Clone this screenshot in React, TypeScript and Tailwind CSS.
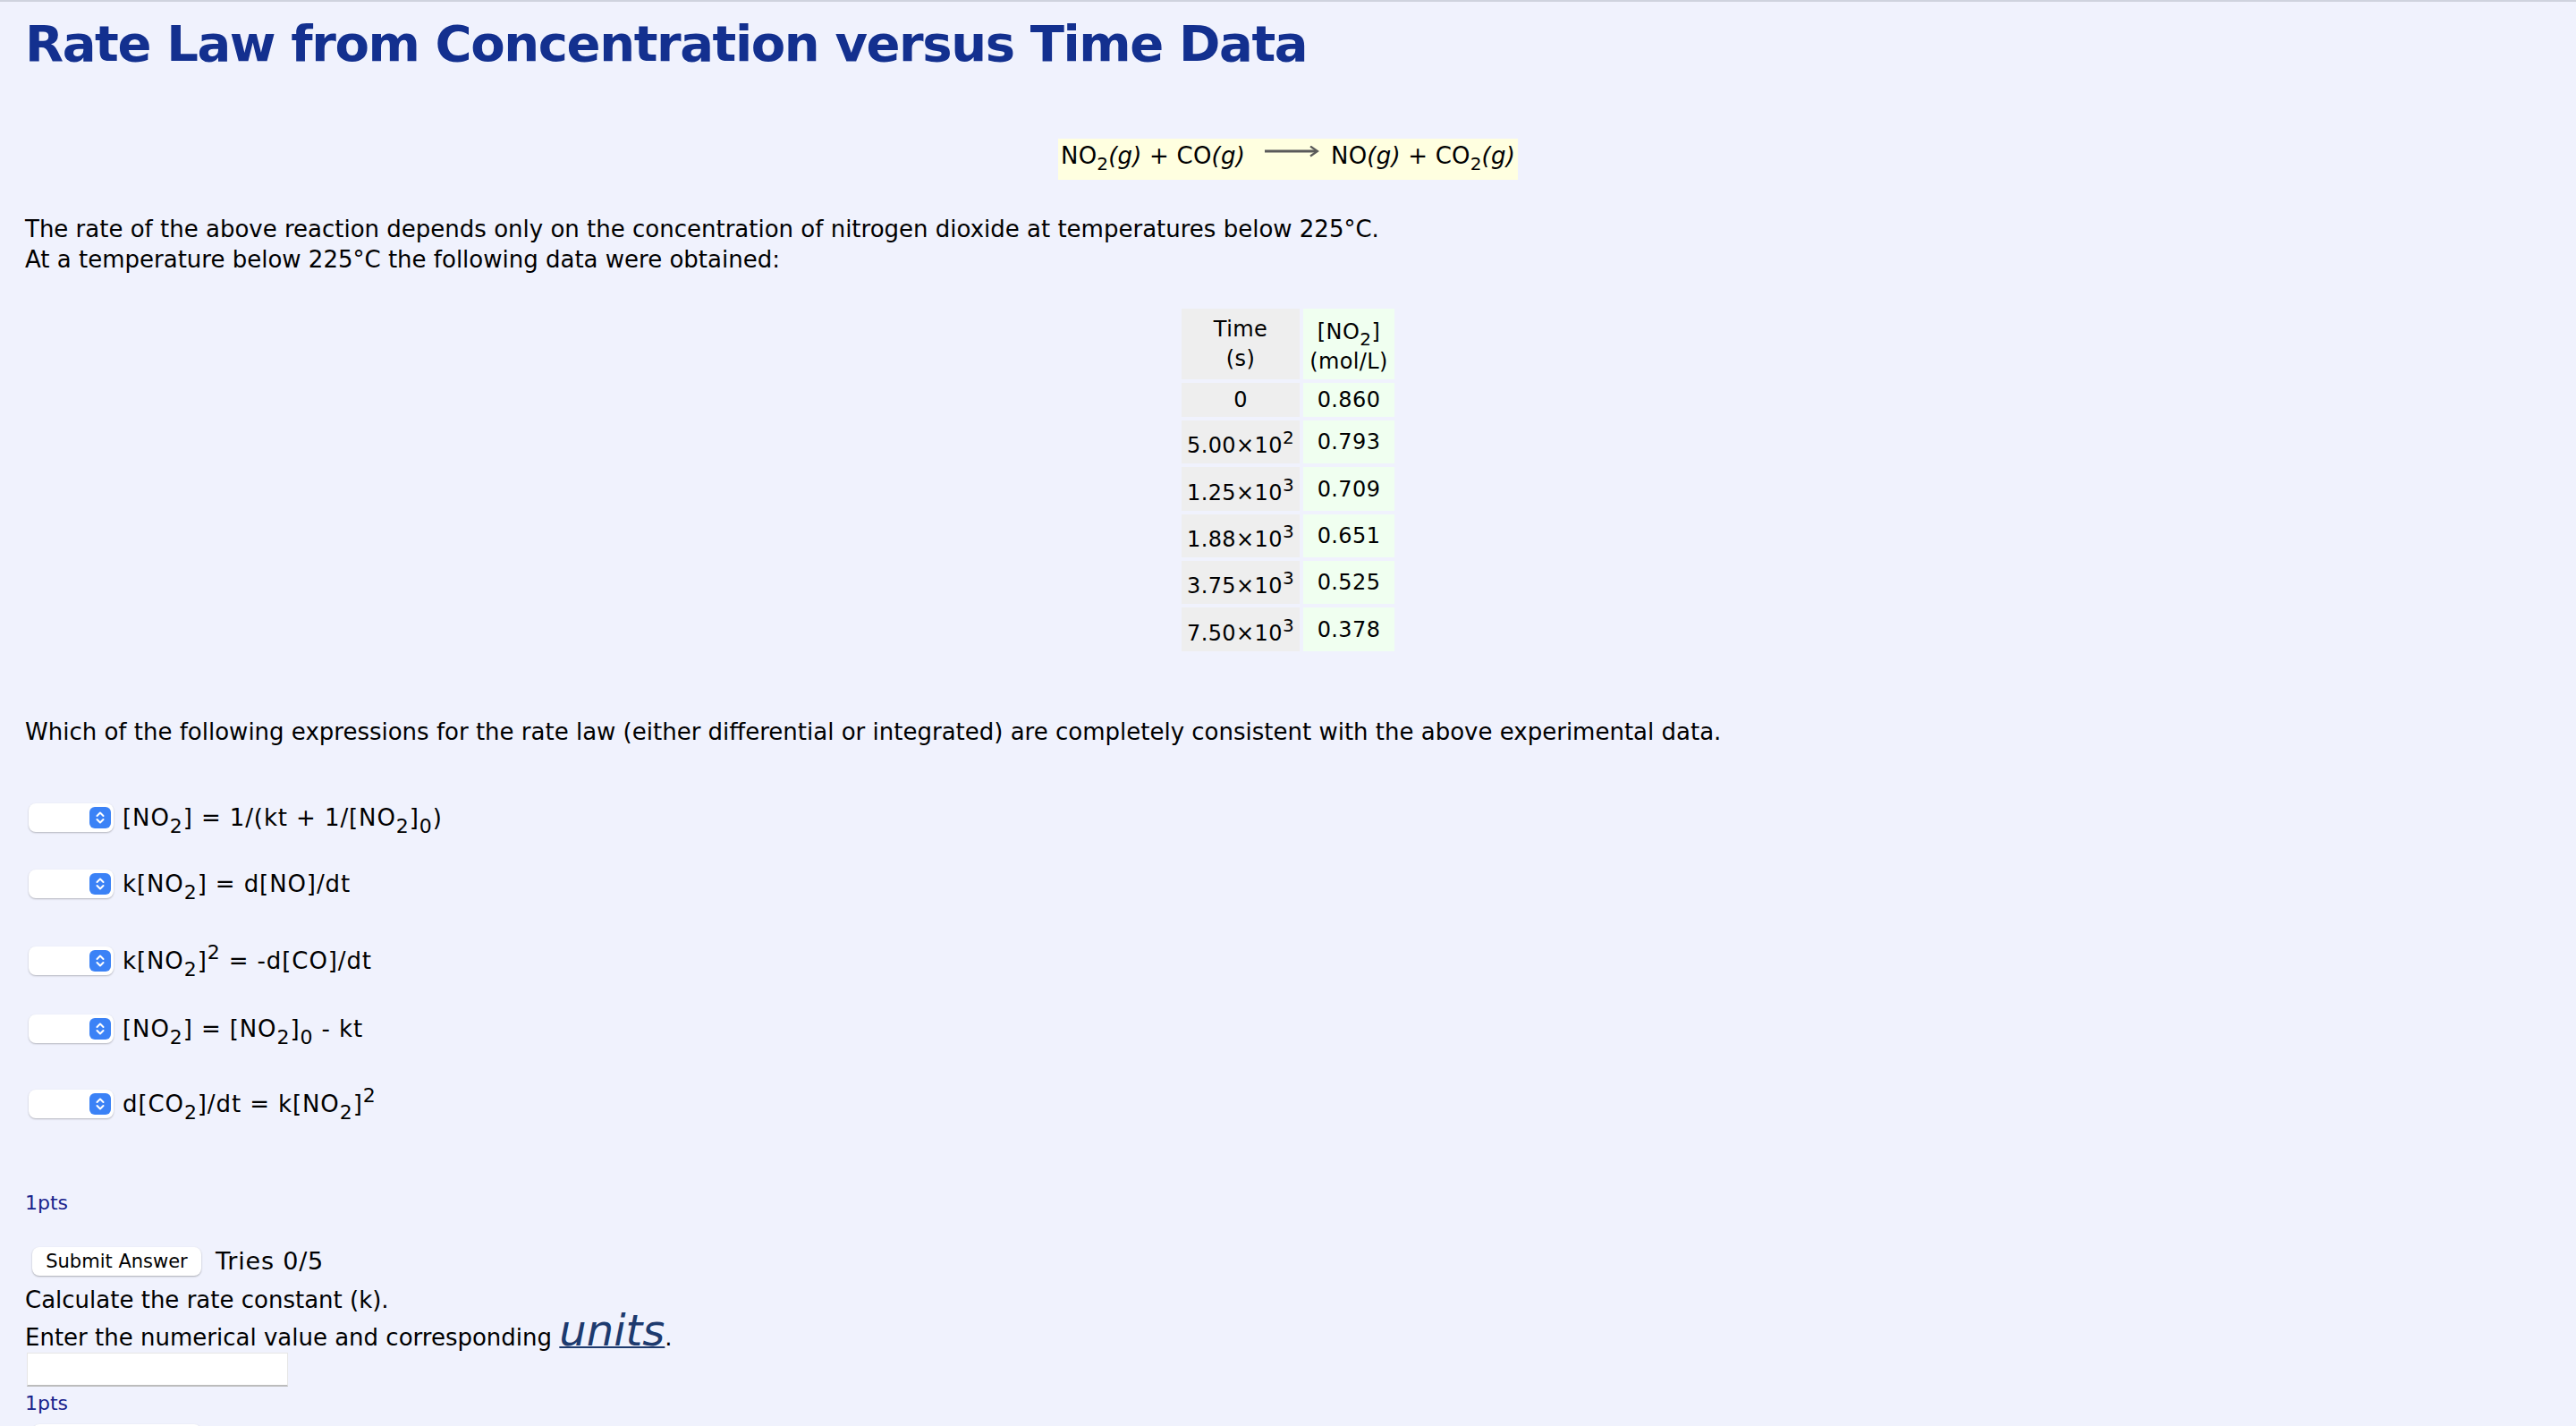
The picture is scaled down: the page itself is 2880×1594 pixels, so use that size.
import React from 'react';

/* inline sub / sup helpers (preflight gives them line-height 0) */
function Sub({ children, big }: { children: React.ReactNode; big?: boolean }) {
  return <sub className={big ? 'relative top-[8px] text-[22px]' : 'relative top-[7px] text-[20px]'}>{children}</sub>;
}

function Sup({ children, big }: { children: React.ReactNode; big?: boolean }) {
  return <sup className={big ? 'relative -top-[11px] text-[22px]' : 'relative -top-[10px] text-[20px]'}>{children}</sup>;
}

function ReactionArrow() {
  return (
    <svg width="62" height="20" viewBox="0 0 62 20" className="inline-block align-baseline ml-[21px] mr-[13px]">
      <path d="M1 6 H59" stroke="#5a5a5a" strokeWidth="3" />
      <path d="M52 0.5 L60 6 L52 11.5" stroke="#5a5a5a" strokeWidth="2.2" fill="none" />
    </svg>
  );
}

function Stepper() {
  return (
    <svg width="24" height="24" viewBox="0 0 24 24" className="shrink-0">
      <rect width="24" height="24" rx="6" fill="#3b82f6" />
      <path d="M8.5 10 L12 6.5 L15.5 10" stroke="#fff" strokeWidth="2" fill="none" strokeLinecap="round" strokeLinejoin="round" />
      <path d="M8.5 14 L12 17.5 L15.5 14" stroke="#fff" strokeWidth="2" fill="none" strokeLinecap="round" strokeLinejoin="round" />
    </svg>
  );
}

const dataRows = [
  { time: <>0</>, conc: '0.860', h: 'h-[38px]', shift: '' },
  { time: <>5.00×10<Sup>2</Sup></>, conc: '0.793', h: 'h-[48px]', shift: 'pt-[8px]' },
  { time: <>1.25×10<Sup>3</Sup></>, conc: '0.709', h: 'h-[49px]', shift: 'pt-[8px]' },
  { time: <>1.88×10<Sup>3</Sup></>, conc: '0.651', h: 'h-[48px]', shift: 'pt-[8px]' },
  { time: <>3.75×10<Sup>3</Sup></>, conc: '0.525', h: 'h-[48px]', shift: 'pt-[8px]' },
  { time: <>7.50×10<Sup>3</Sup></>, conc: '0.378', h: 'h-[49px]', shift: 'pt-[8px]' },
];

const choices = [
  { mt: 'mt-[63px]', expr: <>[NO<Sub big>2</Sub>] = 1/(kt + 1/[NO<Sub big>2</Sub>]<Sub big>0</Sub>)</> },
  { mt: 'mt-[42px]', expr: <>k[NO<Sub big>2</Sub>] = d[NO]/dt</> },
  { mt: 'mt-[54px]', expr: <>k[NO<Sub big>2</Sub>]<Sup big>2</Sup> = -d[CO]/dt</> },
  { mt: 'mt-[44px]', expr: <>[NO<Sub big>2</Sub>] = [NO<Sub big>2</Sub>]<Sub big>0</Sub> - kt</> },
  { mt: 'mt-[52px]', expr: <>d[CO<Sub big>2</Sub>]/dt = k[NO<Sub big>2</Sub>]<Sup big>2</Sup></> },
];

function SelectBox() {
  return (
    <div className="w-[95px] h-[32px] bg-white rounded-[8px] shadow-[0_1px_2px_rgba(0,0,0,0.25)] flex items-center justify-end pr-[3px] shrink-0">
      <Stepper />
    </div>
  );
}

function SubmitButton({ label }: { label?: string }) {
  return (
    <button className="w-[189px] h-[32px] bg-white rounded-[8px] shadow-[0_1px_2px_rgba(0,0,0,0.3)] text-[21px] leading-[32px] text-black text-center shrink-0">
      {label}
    </button>
  );
}

export default function App() {
  return (
    <div className="min-h-screen bg-[#f0f2fd] border-t-2 border-[#cfd3de] font-['DejaVu_Sans',Verdana,sans-serif] text-black overflow-hidden">
      <div className="px-[28px] pt-[13px]">
        <h1 className="text-[56px] font-bold leading-[68px] tracking-[-1.4px] text-[#13308f] whitespace-nowrap">
          Rate Law from Concentration versus Time Data
        </h1>

        {/* reaction */}
        <div className="flex justify-center mt-[72px]">
          <div className="bg-[#ffffe0] h-[46px] px-[3px] pt-[2px] text-[26px] leading-[34px] tracking-[0.2px] whitespace-nowrap">
            NO<Sub>2</Sub><i>(g)</i> + CO<i>(g)</i>
            <ReactionArrow />
            NO<i>(g)</i> + CO<Sub>2</Sub><i>(g)</i>
          </div>
        </div>

        <p className="mt-[38px] text-[26px] leading-[34px] whitespace-nowrap">
          The rate of the above reaction depends only on the concentration of nitrogen dioxide at temperatures below 225°C.
          <br />
          At a temperature below 225°C the following data were obtained:
        </p>

        {/* data table */}
        <div className="flex justify-center mt-[38px]">
          <div className="grid grid-cols-[132px_102px] gap-[4px] text-[24px] leading-[34px] tracking-[0.4px] whitespace-nowrap">
            <div className="h-[79px] bg-[#eeeeee] flex flex-col items-center justify-center leading-[33px]">
              <span>Time</span>
              <span>(s)</span>
            </div>
            <div className="h-[79px] bg-[#f0fff0] flex flex-col items-center justify-center pt-[7px] leading-[33px]">
              <span>
                [NO<Sub>2</Sub>]
              </span>
              <span>(mol/L)</span>
            </div>
            {dataRows.map((r, i) => (
              <React.Fragment key={i}>
                <div className={`${r.h} ${r.shift} bg-[#eeeeee] flex items-center justify-center`}>
                  <span>{r.time}</span>
                </div>
                <div className={`${r.h} bg-[#f0fff0] flex items-center justify-center`}>
                  <span>{r.conc}</span>
                </div>
              </React.Fragment>
            ))}
          </div>
        </div>

        <p className="mt-[73px] text-[26px] leading-[34px] whitespace-nowrap">
          Which of the following expressions for the rate law (either differential or integrated) are completely consistent with the above experimental data.
        </p>

        {choices.map((c, i) => (
          <div key={i} className={`${c.mt} ml-[4px] h-[32px] flex items-center gap-[10px] text-[26px] leading-[34px] tracking-[0.9px] whitespace-nowrap`}>
            <SelectBox />
            <span>{c.expr}</span>
          </div>
        ))}

        <div className="mt-[81px] text-[22px] leading-[28px] text-[#18238c]">1pts</div>

        <div className="mt-[35px] ml-[8px] h-[32px] flex items-center text-[26px] leading-[34px]">
          <SubmitButton label="Submit Answer" />
          <span className="ml-[16px] text-[27px] tracking-[0.8px]">Tries 0/5</span>
        </div>

        <p className="mt-[10px] text-[26px] leading-[34px] whitespace-nowrap">Calculate the rate constant (k).</p>
        <p className="mt-[8px] text-[26px] leading-[34px] whitespace-nowrap">
          Enter the numerical value and corresponding{' '}
          <a href="#" className="italic text-[48px] leading-[0] text-[#1d3a6e] underline decoration-2">
            units
          </a>
          .
        </p>

        <div className="ml-[2px] w-[292px] h-[38px] bg-white border border-[#e6e6e6] border-b-[#bcbcbc] border-b-2" />

        <div className="mt-[5px] text-[22px] leading-[28px] text-[#18238c]">1pts</div>

        {/* next question's button, only its top edge is on screen */}
        <div className="mt-[9px] ml-[8px]">
          <SubmitButton />
        </div>
      </div>
    </div>
  );
}
